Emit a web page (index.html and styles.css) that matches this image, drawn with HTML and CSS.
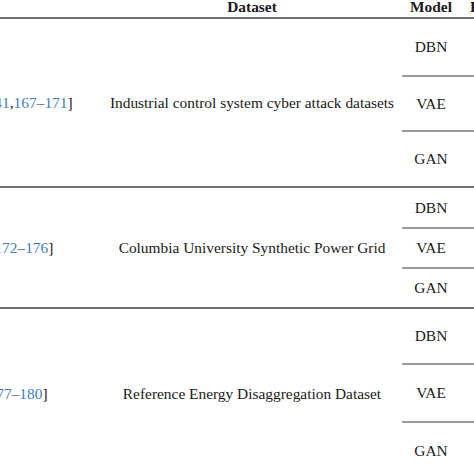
FILE: index.html
```html
<!DOCTYPE html>
<html lang="en">
<head>
<meta charset="utf-8">
<title>Table</title>
<link rel="stylesheet" href="styles.css">
</head>
<body>
<div class="frame">
<table class="tbl">
  <colgroup>
    <col class="c-ref">
    <col class="c-data">
    <col class="c-model">
    <col class="c-next">
  </colgroup>
  <thead>
    <tr class="head">
      <th></th>
      <th>Dataset</th>
      <th>Model</th>
      <th class="next">E</th>
    </tr>
  </thead>
  <tbody class="g1">
    <tr class="r1">
      <td rowspan="3" class="ref">[<a>9</a>,<a>12</a>,<a>41</a>,<a>167</a>–<a>171</a>]</td>
      <td rowspan="3">Industrial control system cyber attack datasets</td>
      <td class="m">DBN</td>
      <td class="m"></td>
    </tr>
    <tr class="r2"><td class="m">VAE</td><td class="m"></td></tr>
    <tr class="r3 last"><td class="m">GAN</td><td class="m"></td></tr>
  </tbody>
  <tbody class="g2">
    <tr class="r1">
      <td rowspan="3" class="ref">[<a>9</a>,<a>172</a>–<a>176</a>]</td>
      <td rowspan="3">Columbia University Synthetic Power Grid</td>
      <td class="m">DBN</td>
      <td class="m"></td>
    </tr>
    <tr class="r2"><td class="m">VAE</td><td class="m"></td></tr>
    <tr class="r3 last"><td class="m">GAN</td><td class="m"></td></tr>
  </tbody>
  <tbody class="g3">
    <tr class="r1">
      <td rowspan="3" class="ref">[<a>177</a>–<a>180</a>]</td>
      <td rowspan="3">Reference Energy Disaggregation Dataset</td>
      <td class="m">DBN</td>
      <td class="m"></td>
    </tr>
    <tr class="r2"><td class="m">VAE</td><td class="m"></td></tr>
    <tr class="r3 last"><td class="m">GAN</td><td class="m"></td></tr>
  </tbody>
</table>
</div>
</body>
</html>
```
FILE: styles.css
```css
html, body {
  margin: 0;
  padding: 0;
  background: #ffffff;
  overflow: hidden;
  width: 474px;
  height: 474px;
}
.frame {
  margin-left: -71px;
  width: 545px;
  overflow: hidden;
}
.tbl {
  border-collapse: collapse;
  table-layout: fixed;
  width: 545px;
  font-family: "Liberation Serif", "Times New Roman", serif;
  font-size: 15.4px;
  color: #1a1a1a;
}
.c-ref { width: 173px; }
.c-data { width: 300px; }
.c-model { width: 58px; }
.c-next { width: 14px; }
th, td {
  padding: 0;
  text-align: center;
  vertical-align: middle;
  white-space: nowrap;
}
.head th {
  height: 17px;
  font-weight: bold;
  vertical-align: top;
  line-height: 13px;
  border-bottom: 2px solid #6f6f6f;
}
.head th.next { text-align: left; padding-left: 10px; overflow: hidden; }
tbody tr.last td, tbody td[rowspan] {
  border-bottom: 2px solid #6f6f6f;
}
td.m { border-bottom: 2px solid #9a9a9a; }
tbody tr.last td.m { border-bottom: 2px solid #6f6f6f; }
.g1 .r1 td.m { height: 56px; }
.g1 .r2 td.m { height: 53px; }
.g1 .r3 td.m { height: 54px; }
.g2 .r1 td.m { height: 39px; }
.g2 .r2 td.m, .g2 .r3 td.m { height: 38px; }
.g3 .r1 td.m { height: 54px; }
.g3 .r2 td.m, .g3 .r3 td.m { height: 56px; }
.ref a { color: #3f7cc0; }
```
